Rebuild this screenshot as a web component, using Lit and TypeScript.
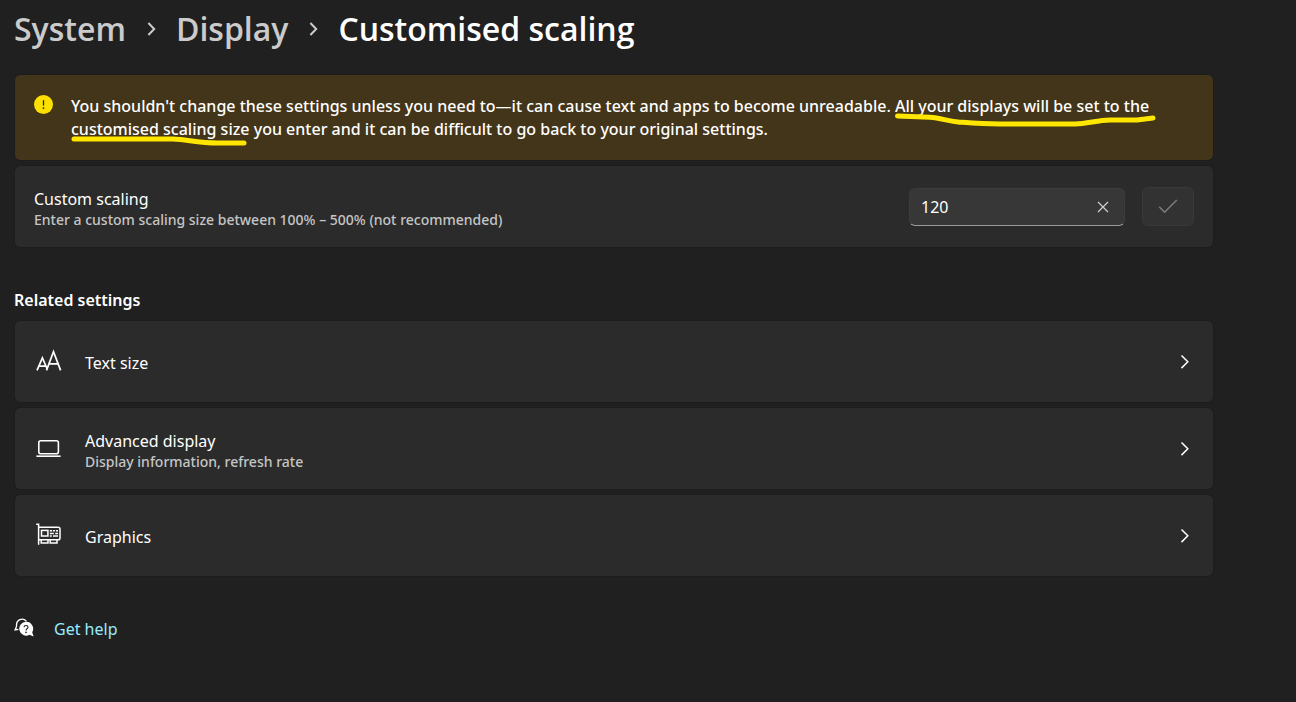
import { LitElement, html, css, svg } from "lit";
import { customElement, state } from "lit/decorators.js";
import { classMap } from "lit/directives/class-map.js";

const chevron = html`<svg class="chevron" viewBox="0 0 10 16" width="10" height="16" aria-hidden="true">
  <path d="M1.5 1.5L7.8 7.8L1.5 14.1" fill="none" stroke="currentColor" stroke-width="1.5" />
</svg>`;

const crumbChevron = html`<svg class="crumb-chevron" viewBox="0 0 10 16" width="10" height="16" aria-hidden="true">
  <path d="M2.4 2L8.2 8L2.4 14" fill="none" stroke="currentColor" stroke-width="2" />
</svg>`;

const textSizeIcon = svg`<path d="M1 21.4L6.4 9L11.2 20M3 17.2H9.4M10.5 21.4L17.5 2.6L24.6 21.4M13 14.8H22" fill="none" stroke="currentColor" stroke-width="1.7" />`;

const laptopIcon = svg`<g fill="none" stroke="currentColor" stroke-width="1.6">
  <rect x="2.8" y="4.8" width="19.6" height="13" rx="2" />
  <path d="M0.4 20.2H24.6" />
</g>`;

const graphicsIcon = svg`<g fill="none" stroke="currentColor" stroke-width="1.5">
  <path d="M0.2 1.2H2.6V21.8" />
  <path d="M2.6 4.2H22.2Q24 4.2 24 6V14.9Q24 16.7 22.2 16.7H2.6" />
  <rect x="5.5" y="7.4" width="6.4" height="5.6" />
  <path d="M13.8 7.7H22" stroke-dasharray="2.2 0.9" />
  <path d="M13.8 10.4H17.8M19.2 10.4H22M13.8 13.1H15.8M17 13.1H22" />
  <path d="M5.2 16.9V19.9H12V16.9M14.2 16.9V19.9H21V16.9" />
</g>`;

@customElement("setting-link")
export class SettingLink extends LitElement {
  static properties = {
    heading: { type: String },
    detail: { type: String },
    icon: { attribute: false },
  };

  declare heading: string;
  declare detail: string;
  declare icon: unknown;

  static styles = css`
    :host {
      display: block;
    }
    .row {
      display: flex;
      align-items: center;
      box-sizing: border-box;
      min-height: 83px;
      padding: 0 23px 0 21px;
      border: 1px solid #1d1d1d;
      border-radius: 6px;
      background: #2b2b2b;
      background-clip: padding-box;
      color: #fff;
      text-decoration: none;
    }
    .row:hover {
      background-color: #323232;
    }
    .icon {
      flex: none;
      margin-right: 23px;
    }
    .text {
      flex: 1;
      display: flex;
      flex-direction: column;
      padding-top: 2px;
    }
    .two-line {
      padding-top: 4px;
    }
    .heading {
      font-size: 16px;
      line-height: 22px;
    }
    .detail {
      font-size: 14px;
      line-height: 20px;
      font-weight: 500;
      color: #c5c5c5;
    }
    .chevron {
      flex: none;
    }
  `;

  render() {
    return html`<a class="row" href="#">
      <svg class="icon" viewBox="0 0 26 26" width="26" height="26" aria-hidden="true">${this.icon}</svg>
      <span class=${classMap({ text: true, "two-line": !!this.detail })}>
        <span class="heading">${this.heading}</span>
        ${this.detail ? html`<span class="detail">${this.detail}</span>` : null}
      </span>
      ${chevron}
    </a>`;
  }
}

@customElement("app-root")
export class AppRoot extends LitElement {
  @state() private scale = "120";

  static styles = css`
    :host {
      display: block;
      box-sizing: border-box;
      min-height: 100vh;
      padding: 8px 82px 24px 14px;
      background: #202020;
      color: #fff;
      font-family: "Segoe UI", "Noto Sans", "Open Sans", sans-serif;
      font-size: 16px;
      line-height: 22px;
    }
    .crumbs {
      display: flex;
      align-items: center;
      gap: 20px;
      font-family: "Segoe UI", "Open Sans", "Noto Sans", sans-serif;
      font-size: 32px;
      line-height: 42px;
      font-weight: 600;
    }
    .crumbs a {
      color: #cbcbcb;
      text-decoration: none;
    }
    .crumbs h1 {
      margin: 0;
      font: inherit;
    }
    .crumb-chevron {
      color: #cbcbcb;
    }
    .banner {
      position: relative;
      display: flex;
      gap: 18px;
      margin-top: 24px;
      padding: 20px 56px 19px 19px;
      border: 1px solid #1d1d1d;
      border-radius: 6px;
      background: #433519;
      background-clip: padding-box;
    }
    .banner p {
      margin: 0;
      line-height: 23px;
      font-weight: 500;
    }
    .alert {
      flex: none;
    }
    .marker {
      position: absolute;
      left: 0;
      top: 0;
      pointer-events: none;
    }
    .card {
      display: flex;
      align-items: center;
      box-sizing: border-box;
      min-height: 83px;
      margin-top: 4px;
      padding: 0 19px;
      border: 1px solid #1d1d1d;
      border-radius: 6px;
      background: #2b2b2b;
      background-clip: padding-box;
    }
    .label {
      flex: 1;
      display: flex;
      flex-direction: column;
      padding-top: 4px;
    }
    .hint {
      font-size: 14px;
      line-height: 20px;
      font-weight: 500;
      color: #c5c5c5;
    }
    .field {
      display: flex;
      align-items: center;
      box-sizing: border-box;
      width: 216px;
      height: 38px;
      border: 1px solid #3c3c3c;
      border-bottom-color: #9a9a9a;
      border-radius: 6px;
      background: #373737;
    }
    .field input {
      flex: 1;
      min-width: 0;
      padding: 0 0 0 11px;
      border: 0;
      outline: 0;
      background: none;
      color: #fff;
      font: inherit;
    }
    .clear {
      display: flex;
      padding: 8px 14px;
      border: 0;
      background: none;
      color: #cfcfcf;
    }
    .apply {
      display: flex;
      align-items: center;
      justify-content: center;
      box-sizing: border-box;
      width: 52px;
      height: 39px;
      margin-left: 17px;
      padding: 0;
      border: 1px solid #393939;
      border-radius: 6px;
      background: #323232;
      color: #7b7b7b;
    }
    h2 {
      margin: 41px 0 9px;
      font-size: 16px;
      line-height: 22px;
      font-weight: 600;
    }
    .links {
      display: flex;
      flex-direction: column;
      gap: 4px;
    }
    .help {
      display: inline-flex;
      align-items: center;
      gap: 20px;
      margin-top: 39px;
      color: #99ebff;
      text-decoration: none;
    }
    .help span {
      padding-top: 2px;
    }
    .help svg {
      flex: none;
      color: #fff;
    }
  `;

  private onInput(event: Event) {
    this.scale = (event.target as HTMLInputElement).value;
  }

  private clear() {
    this.scale = "";
  }

  render() {
    return html`
      <nav class="crumbs" aria-label="Breadcrumb">
        <a href="#">System</a>${crumbChevron}<a href="#">Display</a>${crumbChevron}
        <h1>Customised scaling</h1>
      </nav>

      <section class="banner">
        <svg class="alert" viewBox="0 0 19 19" width="19" height="19" aria-hidden="true">
          <circle cx="9.5" cy="9.5" r="9.5" fill="#fce100" />
          <path d="M9.5 5.2V10.6" stroke="#2b2200" stroke-width="1.3" />
          <circle cx="9.5" cy="13.1" r="0.9" fill="#2b2200" />
        </svg>
        <p>
          You shouldn't change these settings unless you need to—it can cause text and apps to become unreadable. All
          your displays will be set to the customised scaling size you enter and it can be difficult to go back to your
          original settings.
        </p>
        <svg class="marker" viewBox="0 0 1150 84" width="1150" height="84" aria-hidden="true">
          <g fill="none" stroke="#ffe600" stroke-width="5" stroke-linecap="round" stroke-linejoin="round">
            <path d="M882.5 41L915 42.2C926 43 932 46 943 47C956 48 966 49 985 49H1060C1072 49 1082 45.2 1095 45H1122L1138 43" />
            <path d="M59 64H158C172 64.5 183 68 203 68H229" />
          </g>
        </svg>
      </section>

      <section class="card">
        <label class="label" for="scale">
          <span>Custom scaling</span>
          <span class="hint">Enter a custom scaling size between 100% – 500% (not recommended)</span>
        </label>
        <div class="field">
          <input id="scale" type="text" inputmode="numeric" .value=${this.scale} @input=${this.onInput} />
          <button class="clear" type="button" aria-label="Clear" @click=${this.clear}>
            <svg viewBox="0 0 14 14" width="14" height="14">
              <path d="M2 2L12 12M12 2L2 12" fill="none" stroke="currentColor" stroke-width="1.2" />
            </svg>
          </button>
        </div>
        <button class="apply" type="button" aria-label="Apply" disabled>
          <svg viewBox="0 0 20 16" width="20" height="16">
            <path d="M1.2 7.8L6.6 13.2L18.8 1" fill="none" stroke="currentColor" stroke-width="1.6" />
          </svg>
        </button>
      </section>

      <h2>Related settings</h2>
      <div class="links">
        <setting-link heading="Text size" .icon=${textSizeIcon}></setting-link>
        <setting-link
          heading="Advanced display"
          detail="Display information, refresh rate"
          .icon=${laptopIcon}
        ></setting-link>
        <setting-link heading="Graphics" .icon=${graphicsIcon}></setting-link>
      </div>

      <a class="help" href="#">
        <svg viewBox="0 0 20 20" width="20" height="20" aria-hidden="true">
          <path
            d="M12.4 3.2C8.5 -1 2.2 2 2.6 7.2C2.7 8.8 1.8 10.2 1.2 11.8L4.4 11.4"
            fill="none"
            stroke="currentColor"
            stroke-width="1.4"
          />
          <path
            d="M12 3.8a6.9 6.9 0 1 0 3.4 13L19.6 18.6L18.2 14.2A6.9 6.9 0 0 0 12 3.8Z"
            fill="currentColor"
          />
          <path
            d="M10 9.2C10 7 14 7 14 9.2C14 10.5 12 10.8 12 12.4"
            fill="none"
            stroke="#202020"
            stroke-width="1.1"
          />
          <circle cx="12" cy="14.4" r="0.8" fill="#202020" />
        </svg>
        <span>Get help</span>
      </a>
    `;
  }
}
